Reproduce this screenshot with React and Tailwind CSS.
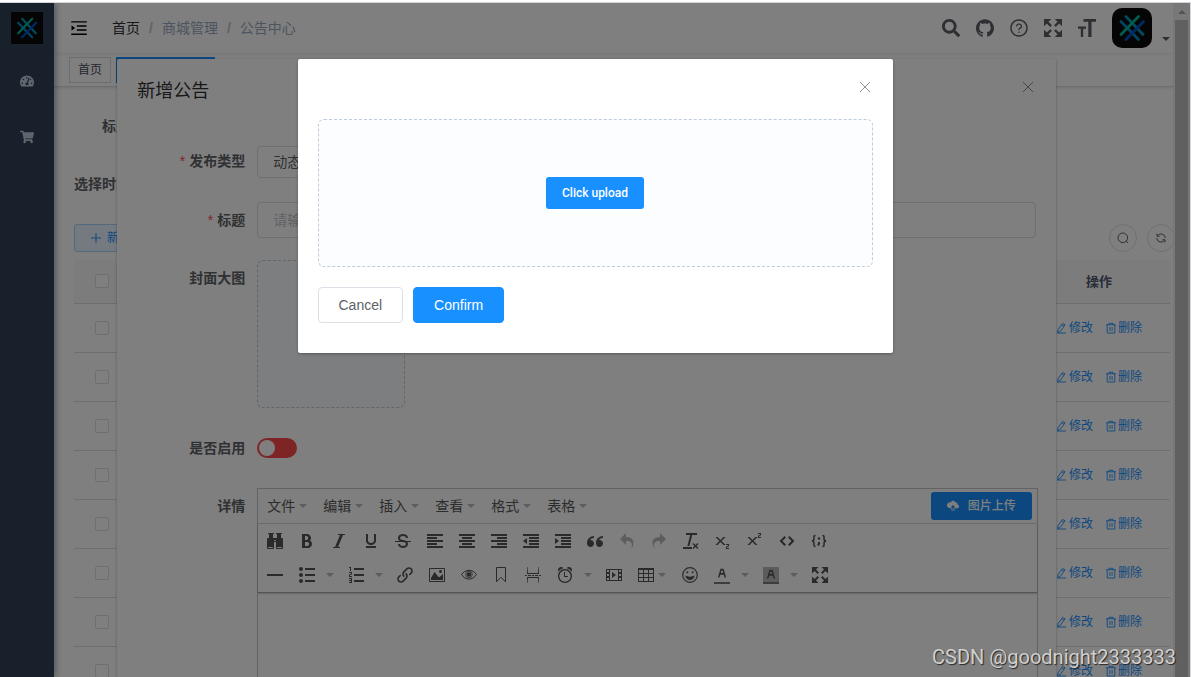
/**
 * Announcement center - list page, "new announcement" dialog and the image upload dialog on top
 */

import { useState } from 'react';
import { AiOutlineMenuUnfold, AiOutlineQuestionCircle } from 'react-icons/ai';
import { FaSearch, FaShoppingCart, FaTachometerAlt } from 'react-icons/fa';
import {
  ImAlarm,
  ImBinoculars,
  ImBold,
  ImClearFormatting,
  ImCloudUpload,
  ImEmbed,
  ImEnlarge,
  ImFilm,
  ImGithub,
  ImImage,
  ImIndentDecrease,
  ImIndentIncrease,
  ImItalic,
  ImLink,
  ImList2,
  ImListNumbered,
  ImPageBreak,
  ImParagraphCenter,
  ImParagraphLeft,
  ImParagraphRight,
  ImQuotesLeft,
  ImRedo2,
  ImStrikethrough,
  ImSubscript,
  ImSuperscript,
  ImTable2,
  ImTextColor,
  ImUnderline,
  ImUndo2,
} from 'react-icons/im';

function LogoMark({ className }) {
  return (
    <svg viewBox="0 0 40 40" className={className} fill="none" strokeWidth="2.8" strokeLinecap="round" aria-hidden="true">
      <path d="M14 8.5 31 26.5" stroke="#0097b8" />
      <path d="M9 13.5 26.5 31.5" stroke="#0086c4" />
      <path d="M26.5 8.5 9 26.5" stroke="#00b89c" />
      <path d="M31.5 13.5 14 31.5" stroke="#0052c4" />
    </svg>
  );
}

function CloseIcon() {
  return (
    <svg viewBox="0 0 16 16" className="size-4" fill="none" stroke="currentColor" aria-hidden="true">
      <path d="M3 3l10 10M13 3L3 13" />
    </svg>
  );
}

function SizeIcon() {
  return (
    <svg viewBox="0 0 18 18" className="size-[18px]" fill="currentColor" aria-hidden="true">
      <path d="M5.500 0H18v2.800h-4.500V18h-3.200V2.800H5.500zM0 7.600h8v2.200H5.200V18H2.800V9.800H0z" />
    </svg>
  );
}

function EditIcon() {
  return (
    <svg viewBox="0 0 12 12" className="size-3" fill="none" stroke="currentColor" strokeWidth="0.9" aria-hidden="true">
      <path d="M6.600 1.400 9 2.800 4.400 9.300 1.600 10.600 1.800 8z M5.600 2.800 8 4.300 M1 11h9" />
    </svg>
  );
}

function TrashIcon() {
  return (
    <svg viewBox="0 0 12 12" className="size-3" fill="none" stroke="currentColor" strokeWidth="0.9" aria-hidden="true">
      <path d="M1 2.8h10M4 2.8V1.3h4v1.5M2.2 2.8v8.2h7.6V2.8M4.9 5v4M7.1 5v4" />
    </svg>
  );
}

function RoundSearchIcon() {
  return (
    <svg viewBox="0 0 12 12" className="size-3" fill="none" stroke="currentColor" aria-hidden="true">
      <circle cx="5.8" cy="5.8" r="4.8" />
      <path d="M9.2 9.2l1.8 1.8" />
    </svg>
  );
}

function RefreshIcon() {
  return (
    <svg viewBox="0 0 12 12" className="size-3" fill="none" stroke="currentColor" aria-hidden="true">
      <path d="M2 1.6v2.6h2.6M2.2 4.2A4.3 4.3 0 0 1 10.3 6M10 10.4V7.8H7.4M9.8 7.8A4.3 4.3 0 0 1 1.7 6" />
    </svg>
  );
}

function BookmarkIcon(props) {
  return (
    <svg viewBox="0 0 16 16" fill="none" stroke="currentColor" {...props}>
      <path d="M3.5.5h9v14.3L8 10.3l-4.5 4.5z" />
    </svg>
  );
}

function EyeIcon(props) {
  return (
    <svg viewBox="0 0 16 16" fill="none" stroke="currentColor" {...props}>
      <path d="M.6 7.600C4 1.900 12 1.900 15.400 7.600 12 13.600 4 13.600.6 7.600z" />
      <circle cx="8" cy="7.500" r="3.300" strokeWidth=".8" />
      <circle cx="8" cy="7.500" r="2.300" fill="currentColor" stroke="none" />
    </svg>
  );
}

function GrinIcon(props) {
  return (
    <svg viewBox="0 0 16 16" fill="none" stroke="currentColor" {...props}>
      <circle cx="8" cy="8" r="7.3" strokeWidth="1.2" />
      <circle cx="5.4" cy="5.2" r="1" fill="currentColor" stroke="none" />
      <circle cx="10.6" cy="5.2" r="1" fill="currentColor" stroke="none" />
      <path d="M3.3 8.6c2.8 1.5 6.600 1.5 9.400 0-.3 2.700-2.200 4.500-4.700 4.500s-4.400-1.800-4.700-4.500z" fill="currentColor" stroke="none" />
    </svg>
  );
}

function CodeSampleIcon(props) {
  return (
    <svg viewBox="0 0 16 16" fill="none" stroke="currentColor" strokeWidth="1.500" {...props}>
      <path d="M4.500 2.500C2.500 2.500 3 4 3 5.500S2.500 8 .8 8C2.500 8 3 9 3 10.500s-.5 3 1.500 3M11.500 2.500c2 0 1.500 1.500 1.500 3S13.500 8 15.200 8C13.500 8 13 9 13 10.500s.5 3-1.500 3" />
      <circle cx="8" cy="5.500" r="1.300" fill="currentColor" stroke="none" />
      <path d="M8 9v1.500l-1 2" strokeWidth="2" />
    </svg>
  );
}

function DashIcon(props) {
  return (
    <svg viewBox="0 0 16 16" fill="currentColor" {...props}>
      <path d="M0 7h16v2H0z" />
    </svg>
  );
}

function ForeColorIcon() {
  return (
    <span className="flex flex-col items-center gap-0.5">
      <ImTextColor className="size-3.5" />
      <span className="h-0.5 w-4 bg-[#7a7a7a]" />
    </span>
  );
}

function BackColorIcon() {
  return (
    <span className="flex h-[17px] w-4 items-center justify-center border-b-2 border-[#7a7a7a] bg-[#b8b8b8]">
      <ImTextColor className="size-3.5" />
    </span>
  );
}

function Caret() {
  return (
    <svg viewBox="0 0 8 4" className="h-1 w-2" fill="#b4b8bf" aria-hidden="true">
      <path d="M0 0h8L4 4z" />
    </svg>
  );
}

const menus = ['文件', '编辑', '插入', '查看', '格式', '表格'];

const toolbarTop = [
  { name: '查找替换', icon: ImBinoculars },
  { name: '粗体', icon: ImBold },
  { name: '斜体', icon: ImItalic },
  { name: '下划线', icon: ImUnderline },
  { name: '删除线', icon: ImStrikethrough },
  { name: '左对齐', icon: ImParagraphLeft },
  { name: '居中', icon: ImParagraphCenter },
  { name: '右对齐', icon: ImParagraphRight },
  { name: '减少缩进', icon: ImIndentDecrease },
  { name: '增加缩进', icon: ImIndentIncrease },
  { name: '引用', icon: ImQuotesLeft },
  { name: '撤销', icon: ImUndo2, disabled: true },
  { name: '重做', icon: ImRedo2, disabled: true },
  { name: '清除格式', icon: ImClearFormatting },
  { name: '下标', icon: ImSubscript },
  { name: '上标', icon: ImSuperscript },
  { name: '源代码', icon: ImEmbed },
  { name: '代码示例', icon: CodeSampleIcon },
];

const toolbarBottom = [
  { name: '水平线', icon: DashIcon },
  { name: '项目符号', icon: ImList2, split: true },
  { name: '编号列表', icon: ImListNumbered, split: true },
  { name: '链接', icon: ImLink },
  { name: '图片', icon: ImImage },
  { name: '预览', icon: EyeIcon },
  { name: '锚点', icon: BookmarkIcon },
  { name: '分页符', icon: ImPageBreak },
  { name: '日期时间', icon: ImAlarm, split: true },
  { name: '视频', icon: ImFilm },
  { name: '表格', icon: ImTable2, menu: true },
  { name: '表情', icon: GrinIcon },
  { name: '文字颜色', icon: ForeColorIcon, split: true },
  { name: '背景色', icon: BackColorIcon, split: true },
  { name: '全屏', icon: ImEnlarge },
];

function ToolbarRow({ items }) {
  return (
    <div className="flex h-[34px] items-center text-[#555]">
      {items.map(({ name, icon: Icon, disabled, split, menu }) => (
        <div key={name} className="flex items-center">
          <button
            type="button"
            aria-label={name}
            disabled={disabled}
            className={`flex h-7 items-center disabled:opacity-40 ${menu ? 'w-11 gap-1 pl-2' : 'w-8 justify-center'}`}
          >
            <Icon className="size-4" />
            {menu && <Caret />}
          </button>
          {split && (
            <button type="button" aria-label={`${name}选项`} className="flex h-7 w-[17px] items-center pl-[3px]">
              <Caret />
            </button>
          )}
        </div>
      ))}
    </div>
  );
}

function Sidebar() {
  return (
    <aside className="z-10 flex w-[54px] shrink-0 flex-col items-center bg-[#304156] text-[#bfcbd9] shadow-[2px_0_6px_rgba(0,21,41,0.35)]">
      <a href="#" aria-label="首页" className="flex h-[50px] items-center">
        <span className="bg-[#0a0a0a]">
          <LogoMark className="size-8" />
        </span>
      </a>
      <a href="#dashboard" aria-label="控制台" className="flex h-14 items-center">
        <FaTachometerAlt className="size-3.5" />
      </a>
      <a href="#mall" aria-label="商城管理" className="flex h-14 items-center">
        <FaShoppingCart className="size-3.5" />
      </a>
    </aside>
  );
}

function Navbar() {
  return (
    <header className="flex h-[50px] shrink-0 items-center justify-between shadow-[0_1px_4px_rgba(0,21,41,0.08)]">
      <div className="flex items-center gap-2">
        <button type="button" aria-label="展开菜单" className="px-[15px] text-black">
          <AiOutlineMenuUnfold className="size-5" />
        </button>
        <nav className="flex text-sm">
          <a href="#" className="text-[#303133]">首页</a>
          <span className="mx-[9px] font-bold text-[#c0c4cc]">/</span>
          <span className="text-[#97a8be]">商城管理</span>
          <span className="mx-[9px] font-bold text-[#c0c4cc]">/</span>
          <span className="text-[#97a8be]">公告中心</span>
        </nav>
      </div>
      <div className="flex items-center gap-4 pr-[3px] text-[#5a5e66]">
        <button type="button" aria-label="搜索"><FaSearch className="size-[18px]" /></button>
        <a href="#github" aria-label="GitHub"><ImGithub className="size-[18px]" /></a>
        <a href="#help" aria-label="帮助"><AiOutlineQuestionCircle className="size-5 -mx-px" /></a>
        <button type="button" aria-label="全屏"><ImEnlarge className="size-[18px]" /></button>
        <button type="button" aria-label="布局大小"><SizeIcon /></button>
        <button type="button" aria-label="用户菜单" className="flex items-end gap-2.5">
          <span className="rounded-[10px] bg-[#0a0a0a]">
            <LogoMark className="size-10" />
          </span>
          <svg viewBox="0 0 8 4" className="mb-[7px] h-1 w-2" fill="currentColor" aria-hidden="true">
            <path d="M0 0h8L4 4z" />
          </svg>
        </button>
      </div>
    </header>
  );
}

function TagsView() {
  return (
    <div className="flex h-[34px] shrink-0 gap-[5px] border-b border-[#d8dce5] pt-1 pl-[15px] text-xs shadow-[0_1px_3px_rgba(0,0,0,0.12)]">
      <a href="#" className="flex h-[26px] items-center border border-[#d8dce5] px-2 text-[#495060]">首页</a>
      <a href="#notice" className="flex h-[26px] w-[99px] items-center border border-[#1890ff] bg-[#1890ff] px-2 text-white">公告中心</a>
    </div>
  );
}

function NoticeList() {
  const rows = Array.from({ length: 8 }, (_, i) => i + 1);

  return (
    <main className="flex-1 overflow-hidden pt-5 pl-5">
      <form className="text-sm text-[#606266]">
        <div className="mb-[22px] flex h-[37px] items-center">
          <label htmlFor="query-title" className="w-[68px] pr-3 text-right font-bold">标题</label>
          <input id="query-title" className="h-8 w-52 rounded border border-[#dcdfe6] px-4" />
        </div>
        <div className="mb-[22px] flex h-9 items-center">
          <label htmlFor="query-time" className="w-[68px] shrink-0 pr-3 text-right font-bold whitespace-nowrap">选择时间</label>
          <input id="query-time" className="h-8 w-52 rounded border border-[#dcdfe6] px-4" />
        </div>
      </form>

      <div className="mb-2 -mr-0.5 flex justify-between text-xs">
        <button type="button" className="flex h-7 items-center gap-[5px] rounded-[3px] border border-[#a3d3ff] bg-[#e8f4ff] px-[15px] text-[#1890ff]">
          <svg viewBox="0 0 12 12" className="size-3" fill="none" stroke="currentColor" aria-hidden="true">
            <path d="M6 1v10M1 6h10" />
          </svg>
          新增
        </button>
        <div className="flex gap-2.5 text-[#606266]">
          <button type="button" aria-label="搜索" className="flex size-7 items-center justify-center rounded-full border border-[#dcdfe6]">
            <RoundSearchIcon />
          </button>
          <button type="button" aria-label="刷新" className="flex size-7 items-center justify-center rounded-full border border-[#dcdfe6]">
            <RefreshIcon />
          </button>
        </div>
      </div>

      <div className="pr-[3px]">
        <table className="w-full table-fixed text-center text-xs">
          <colgroup>
            <col className="w-[55px]" />
            <col />
            <col className="w-[142px]" />
          </colgroup>
          <thead>
            <tr className="h-[43px] border-b border-[#d9dde3] bg-[#f8f8f9] text-[13px] text-[#515a6e]">
              <th>
                <input type="checkbox" aria-label="全选" className="block mx-auto size-3.5 appearance-none rounded-xs border border-[#dcdfe6] bg-white" />
              </th>
              <th />
              <th className="font-bold">操作</th>
            </tr>
          </thead>
          <tbody>
            {rows.map((row) => (
              <tr key={row} className="h-[49px] border-b border-[#d9dde3]">
                <td>
                  <input type="checkbox" aria-label={`选择第${row}行`} className="block mx-auto size-3.5 appearance-none rounded-xs border border-[#dcdfe6]" />
                </td>
                <td />
                <td>
                  <div className="flex justify-center gap-3 text-[#1890ff]">
                    <button type="button" className="flex items-center gap-px"><EditIcon />修改</button>
                    <button type="button" className="flex items-center gap-px"><TrashIcon />删除</button>
                  </div>
                </td>
              </tr>
            ))}
          </tbody>
        </table>
      </div>
    </main>
  );
}

function RichEditor() {
  return (
    <div className="-mr-0.5 flex-1 border border-[#c5c5c5]">
      <div className="flex h-[35px] items-center justify-between border-b border-[#dadada] pr-[5px] pl-px">
        <div className="flex">
          {menus.map((menu) => (
            <button key={menu} type="button" className="flex w-14 items-center gap-1 pl-2 text-sm text-[#595959]">
              {menu}
              <Caret />
            </button>
          ))}
        </div>
        <button type="button" className="flex h-7 items-center gap-[9px] rounded-[3px] bg-[#1890ff] px-4 text-xs font-medium text-white">
          <ImCloudUpload className="size-3" />
          图片上传
        </button>
      </div>
      <div className="border-b border-[#a8a8a8] pl-px shadow-[0_1px_2px_rgba(0,0,0,0.2)]">
        <ToolbarRow items={toolbarTop} />
        <ToolbarRow items={toolbarBottom} />
      </div>
      <textarea id="notice-detail" aria-label="详情" className="block h-72 w-full resize-none p-4 text-sm outline-none" />
    </div>
  );
}

function FormRow({ id, label, required, children }) {
  return (
    <div className="flex text-sm">
      <label htmlFor={id} className="w-[120px] shrink-0 pr-3 text-right leading-9 font-bold text-[#606266]">
        {required && <span className="mr-1 font-normal text-[#ff4949]">*</span>}
        {label}
      </label>
      {children}
    </div>
  );
}

function NoticeDialog() {
  const [enabled, setEnabled] = useState(false);

  return (
    <section role="dialog" aria-label="新增公告" className="w-4/5 shrink-0 rounded-xs bg-white shadow-[0_1px_3px_rgba(0,0,0,0.3)]">
      <div className="flex items-start justify-between px-5 pt-5 pb-2.5">
        <h2 className="text-lg leading-6 text-[#303133]">新增公告</h2>
        <button type="button" aria-label="关闭" className="text-[#909399]"><CloseIcon /></button>
      </div>
      <form className="flex flex-col gap-[22px] px-5 py-[30px]">
        <FormRow id="notice-type" label="发布类型" required>
          <div className="flex h-[37px] items-center">
            <select id="notice-type" className="h-8 w-56 appearance-none rounded border border-[#dcdfe6] px-[15px] text-[#606266]">
              <option>动态</option>
            </select>
          </div>
        </FormRow>
        <FormRow id="notice-title" label="标题" required>
          <input
            id="notice-title"
            placeholder="请输入标题"
            className="h-9 min-w-0 flex-1 rounded border border-[#dcdfe6] px-[15px] placeholder:text-[#c0c4cc]"
          />
        </FormRow>
        <FormRow id="notice-cover" label="封面大图">
          <button id="notice-cover" type="button" aria-label="选择封面大图" className="size-[148px] rounded-md border border-dashed border-[#c0ccda] bg-[#fbfdff]" />
        </FormRow>
        <FormRow id="notice-enabled" label="是否启用">
          <div className="flex h-9 items-center">
            <input
              id="notice-enabled"
              type="checkbox"
              checked={enabled}
              onChange={(e) => setEnabled(e.target.checked)}
              className="flex h-5 w-10 appearance-none items-center rounded-full bg-[#ff4949] px-0.5 before:size-4 before:rounded-full before:bg-white checked:justify-end checked:bg-[#13ce66]"
            />
          </div>
        </FormRow>
        <FormRow id="notice-detail" label="详情">
          <RichEditor />
        </FormRow>
      </form>
    </section>
  );
}

function UploadDialog() {
  return (
    <section role="dialog" aria-label="Upload" className="w-1/2 rounded-xs bg-white px-5 pb-[30px] shadow-[0_1px_3px_rgba(0,0,0,0.3)]">
      <div className="flex h-[60px] items-start justify-end pt-5">
        <button type="button" aria-label="Close" className="text-[#909399]"><CloseIcon /></button>
      </div>
      <div className="mb-5 flex h-[148px] items-center justify-center rounded-md border border-dashed border-[#c0ccda] bg-[#fbfdff]">
        <button type="button" className="h-8 rounded-[3px] bg-[#1890ff] px-4 font-['Roboto',sans-serif] text-xs font-medium text-white">
          Click upload
        </button>
      </div>
      <div className="flex gap-2.5 text-sm">
        <button type="button" className="h-9 rounded border border-[#dcdfe6] px-5 text-[#606266]">Cancel</button>
        <button type="button" className="h-9 rounded border border-[#1890ff] bg-[#1890ff] px-5 text-white">Confirm</button>
      </div>
    </section>
  );
}

export default function App() {
  return (
    <div className="flex h-screen flex-col overflow-hidden bg-white pt-0.5 font-['Liberation_Sans','Noto_Sans_CJK_SC',sans-serif]">
      <div className="relative flex min-h-0 flex-1 overflow-hidden border-t border-r border-[#d3d3d8]">
        <Sidebar />
        <div className="flex min-w-0 flex-1 flex-col overflow-hidden">
          <Navbar />
          <TagsView />
          <NoticeList />
        </div>

        {/* page scrollbar */}
        <div className="flex w-[17px] shrink-0 flex-col items-center gap-1.5 bg-[#f1f1f1] px-0.5 pt-[7px]">
          <svg viewBox="0 0 8 4" className="h-1 w-2 shrink-0" fill="#a3a3a3" aria-hidden="true">
            <path d="M0 4h8L4 0z" />
          </svg>
          <div className="w-full flex-1 bg-[#c1c1c1]" />
        </div>

        <div className="absolute inset-0 z-20 flex items-start justify-center overflow-hidden pt-14 pr-[17px]">
          <NoticeDialog />
        </div>
        <div className="absolute inset-0 z-30 flex items-start justify-center bg-black/50 pt-14">
          <UploadDialog />
        </div>
        <p className="absolute right-3.5 bottom-1.5 z-40 font-['Roboto',sans-serif] text-xl leading-7 text-[#d0d0d0] [text-shadow:1px_1px_1px_rgba(0,0,0,0.7)]">
          CSDN @goodnight2333333
        </p>
      </div>
    </div>
  );
}
